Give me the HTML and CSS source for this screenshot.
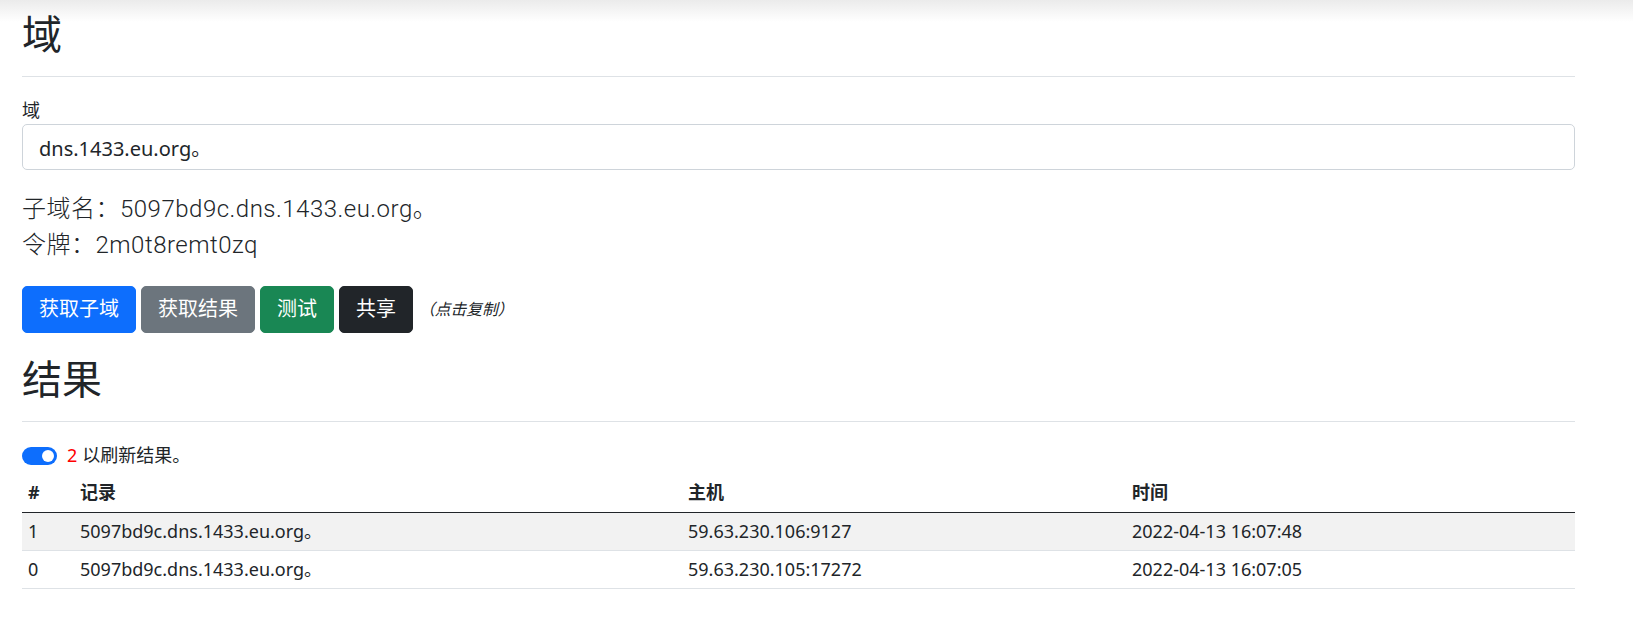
FILE: index.html
```html
<!DOCTYPE html>
<html lang="zh">
<head>
<meta charset="utf-8">
<title>域</title>
<link rel="stylesheet" href="styles.css">
</head>
<body>
<main class="page">
  <h1 class="section-title first">域</h1>
  <div class="field">
    <label class="field-label" for="domain">域</label>
    <input id="domain" class="field-input" type="text" value="dns.1433.eu.org。">
  </div>
  <p class="lead-info">子域名：5097bd9c.dns.1433.eu.org。<br>令牌：2m0t8remt0zq</p>
  <div class="actions">
    <button class="btn btn-blue">获取子域</button>
    <button class="btn btn-gray">获取结果</button>
    <button class="btn btn-green">测试</button>
    <button class="btn btn-dark">共享</button>
    <small class="hint">（点击复制）</small>
  </div>
  <h1 class="section-title">结果</h1>
  <div class="refresh">
    <span class="switch"><span class="knob"></span></span>
    <span class="count">2</span>
    <span class="refresh-text">以刷新结果。</span>
  </div>
  <table class="results">
    <colgroup>
      <col class="c1"><col class="c2"><col class="c3"><col class="c4">
    </colgroup>
    <thead>
      <tr><th>#</th><th>记录</th><th>主机</th><th>时间</th></tr>
    </thead>
    <tbody>
      <tr class="striped"><td>1</td><td>5097bd9c.dns.1433.eu.org。</td><td>59.63.230.106:9127</td><td>2022-04-13 16:07:48</td></tr>
      <tr><td>0</td><td>5097bd9c.dns.1433.eu.org。</td><td>59.63.230.105:17272</td><td>2022-04-13 16:07:05</td></tr>
    </tbody>
  </table>
</main>
</body>
</html>
```
FILE: styles.css
```css
html, body {
  margin: 0;
  padding: 0;
}
body {
  font-family: "Noto Sans", "Noto Sans CJK SC", sans-serif;
  font-size: 18px;
  line-height: 1.5;
  color: #212529;
  background: #fff linear-gradient(#ebebeb, #ffffff) no-repeat;
  background-size: 100% 22px;
}
.page {
  width: 1553px;
  margin-left: 22px;
  padding-top: 10px;
}
.section-title {
  font-size: 40px;
  font-weight: 400;
  line-height: 48px;
  margin: 0;
  padding-bottom: 18px;
  border-bottom: 1px solid #dee2e6;
}
.section-title.first {
  margin-bottom: 20px;
}
.field-label {
  display: block;
  font-size: 18px;
  line-height: 27px;
  margin-bottom: 0;
}
.field-input {
  display: block;
  box-sizing: border-box;
  width: 100%;
  height: 46px;
  padding: 6px 16px;
  font-family: inherit;
  font-size: 20px;
  color: #212529;
  border: 1px solid #ced4da;
  border-radius: 5px;
  background: #fff;
}
.lead-info {
  margin: 21px 0 23px;
  font-family: "Roboto", "Noto Sans CJK SC", sans-serif;
  font-size: 24px;
  font-weight: 300;
  line-height: 36px;
  letter-spacing: 0.5px;
}
.actions {
  display: flex;
  align-items: center;
  gap: 5px;
}
.btn {
  font-family: inherit;
  font-size: 20px;
  line-height: 30px;
  padding: 7px 16px 8px;
  border: 1px solid transparent;
  border-radius: 5px;
  color: #fff;
  cursor: pointer;
}
.btn-blue { background: #0d6efd; border-color: #0d6efd; }
.btn-gray { background: #6c757d; border-color: #6c757d; }
.btn-green { background: #198754; border-color: #198754; }
.btn-dark { background: #212529; border-color: #212529; }
.hint {
  font-size: 15.75px;
  font-style: italic;
  margin-left: 1px;
}
.actions + .section-title {
  margin-top: 22px;
}
.refresh {
  display: flex;
  align-items: center;
  margin-top: 20px;
  font-size: 18px;
  line-height: 27px;
}
.switch {
  display: inline-flex;
  align-items: center;
  justify-content: flex-end;
  box-sizing: border-box;
  width: 35px;
  height: 18px;
  padding: 0 3px;
  border-radius: 9px;
  background: #0d6efd;
  margin-right: 10px;
}
.knob {
  width: 12px;
  height: 12px;
  border-radius: 50%;
  background: #fff;
}
.count {
  color: #ff0000;
  margin-right: 5px;
}
.results {
  width: 100%;
  border-collapse: collapse;
  margin-top: 4px;
  font-size: 18px;
}
.c1 { width: 52px; }
.c2 { width: 608px; }
.c3 { width: 444px; }
.results th,
.results td {
  text-align: left;
  padding: 5px 6px;
  line-height: 27px;
}
.results th {
  font-weight: 700;
  padding-top: 6px;
  padding-bottom: 6px;
  border-bottom: 1px solid #212529;
}
.results td {
  border-bottom: 1px solid #dee2e6;
}
.results tr.striped td {
  background: #f2f2f2;
}
```
